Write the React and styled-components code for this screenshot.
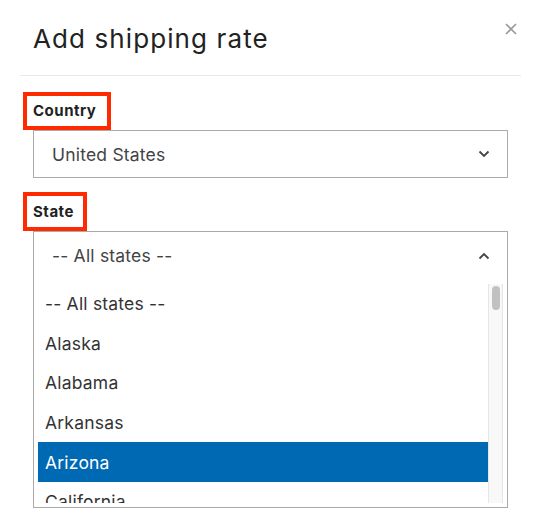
import React from "react";
import styled, { createGlobalStyle } from "styled-components";

const Global = createGlobalStyle`
  html, body { margin: 0; padding: 0; background: #fff; }
  body { font-family: Inter, "Noto Sans", sans-serif; color: #333; }
`;

const Modal = styled.div`
  width: 501px;
  margin-left: 20px;
  background: #fff;
`;

const Header = styled.div`
  height: 75px;
  border-bottom: 1px solid #e9e9e9;
  display: flex;
  align-items: flex-start;
  justify-content: space-between;
  padding: 0 4px 0 13px;
`;

const Title = styled.h1`
  margin: 0;
  padding-top: 22px;
  font-size: 26px;
  line-height: 34px;
  font-weight: 400;
  color: #222;
  letter-spacing: 1.1px;
`;

const Close = styled.button`
  border: 0;
  background: none;
  padding: 0;
  margin-top: 23px;
  width: 12px;
  height: 12px;
  display: flex;
  cursor: pointer;
`;

const Body = styled.div`
  padding: 16px 13px 0 13px;
  display: flex;
  flex-direction: column;
`;

const Field = styled.div`
  display: flex;
  flex-direction: column;
  align-items: flex-start;
  margin-bottom: ${(p) => p.$gap || 0}px;
`;

const Label = styled.label`
  display: inline-block;
  margin-left: -10px;
  border: 4px solid #ff2a00;
  padding: ${(p) => p.$pad || "5px 11px 6px 6px"};
  font-size: 15px;
  line-height: 19px;
  font-weight: 700;
  color: #222;
  letter-spacing: 0.5px;
`;

const SelectBox = styled.div`
  align-self: stretch;
  border: 1px solid #aaa;
  background: #fff;
  display: flex;
  flex-direction: column;
`;

const SelectHead = styled.div`
  height: ${(p) => p.$h || 46}px;
  display: flex;
  align-items: center;
  justify-content: space-between;
  padding: 0 17px 0 18px;
  font-size: 17.5px;
  color: #444;
  letter-spacing: 0.2px;
`;

const ListWrap = styled.div`
  display: flex;
  margin: 5px 4px 4px 4px;
  height: 219px;
  overflow: hidden;
`;

const List = styled.ul`
  list-style: none;
  margin: 0;
  padding: 0;
  flex: 1;
  overflow: hidden;
`;

const Item = styled.li`
  height: 39.6px;
  flex-shrink: 0;
  display: flex;
  align-items: center;
  padding-left: 7px;
  font-size: 17.5px;
  letter-spacing: 0.2px;
  color: ${(p) => (p.$active ? "#fff" : "#333")};
  background: ${(p) => (p.$active ? "#0069b4" : "transparent")};
`;

const Track = styled.div`
  width: 13px;
  background: #f8f8f8;
  border-left: 1px solid #e6e6e6;
  border-right: 1px solid #e6e6e6;
  display: flex;
  justify-content: center;
`;

const Thumb = styled.div`
  width: 8px;
  height: 24px;
  margin-top: 2px;
  border-radius: 4px;
  background: #c1c1c1;
`;

const Chevron = ({ up }) => (
  <svg width="12" height="8" viewBox="0 0 12 8">
    <path
      d={up ? "M1.5 6.5 L6 2 L10.5 6.5" : "M1.5 1.5 L6 6 L10.5 1.5"}
      fill="none"
      stroke="#444"
      strokeWidth="1.8"
    />
  </svg>
);

const states = ["-- All states --", "Alaska", "Alabama", "Arkansas", "Arizona", "California"];

export default function App() {
  return (
    <>
      <Global />
      <Modal>
        <Header>
          <Title>Add shipping rate</Title>
          <Close aria-label="Close">
            <svg width="12" height="12" viewBox="0 0 12 12">
              <path d="M1 1 L11 11 M11 1 L1 11" stroke="#999" strokeWidth="1.6" />
            </svg>
          </Close>
        </Header>
        <Body>
          <Field $gap={14}>
            <Label>Country</Label>
            <SelectBox>
              <SelectHead>
                <span>United States</span>
                <Chevron />
              </SelectHead>
            </SelectBox>
          </Field>
          <Field>
            <Label $pad="6px 9px 6px 6px">State</Label>
            <SelectBox>
              <SelectHead $h={47}>
                <span>-- All states --</span>
                <Chevron up />
              </SelectHead>
              <ListWrap>
                <List>
                  {states.map((s) => (
                    <Item key={s} $active={s === "Arizona"}>
                      {s}
                    </Item>
                  ))}
                </List>
                <Track>
                  <Thumb />
                </Track>
              </ListWrap>
            </SelectBox>
          </Field>
        </Body>
      </Modal>
    </>
  );
}
